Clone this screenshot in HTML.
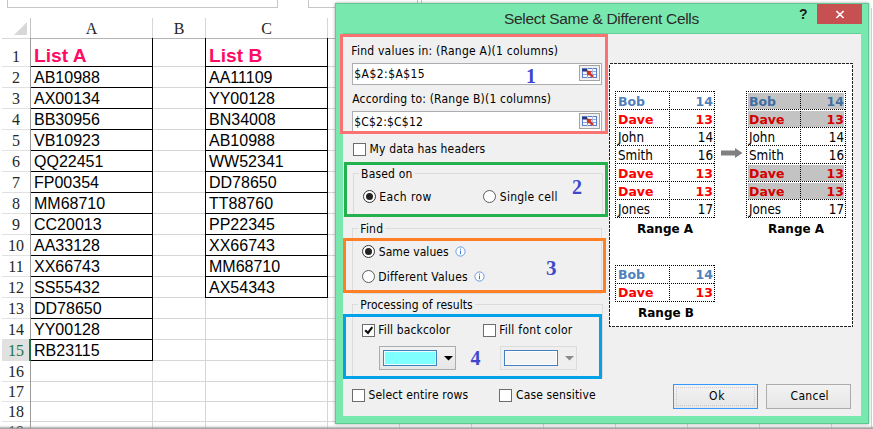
<!DOCTYPE html>
<html><head><meta charset="utf-8"><title>Select Same &amp; Different Cells</title>
<style>
html,body{margin:0;padding:0;}
body{width:873px;height:429px;position:relative;overflow:hidden;background:#fff;font-family:"Liberation Sans",sans-serif;}
.a{position:absolute;}
.gl{position:absolute;background:#d6d6d6;}
.bl{position:absolute;background:#000;}
.rn{position:absolute;left:2px;width:28px;text-align:center;font:16px/20px "Liberation Serif",serif;color:#262626;height:20px;}
.ch{position:absolute;top:19px;height:20px;text-align:center;font:16px/20px "Liberation Serif",serif;color:#262626;}
.ct{position:absolute;font:16px/20px "Liberation Sans",sans-serif;color:#000;white-space:nowrap;height:20px;}
.hd{font-weight:bold;font-size:19.2px;color:#ff0a64;}
.dt{position:absolute;font:12px/14px "DejaVu Sans Condensed","DejaVu Sans",sans-serif;color:#000;white-space:nowrap;letter-spacing:0px;}
.cb{position:absolute;width:11px;height:11px;border:1px solid #6c6c6c;background:#fff;}
.rd{position:absolute;width:11px;height:11px;border:1px solid #5c5c5c;background:#fff;border-radius:50%;}
.rd.on{border-color:#333;}
.rd.on:after{content:"";position:absolute;left:2px;top:2px;width:7px;height:7px;border-radius:50%;background:#222;}
.gb{position:absolute;border:1px solid #dcdcdc;}
.num{position:absolute;font:bold 20px/20px "Liberation Serif",serif;color:#3f48cc;}
.pv{position:absolute;font:bold 12.5px/18px "DejaVu Sans",sans-serif;white-space:nowrap;}
.btn{position:absolute;box-sizing:border-box;border:1px solid #acacac;background:linear-gradient(#f2f2f2,#e6e6e6);}
</style></head><body>

<div class="a" id="sheet" style="left:0;top:0;width:340px;height:429px;">
<div class="a" style="left:7px;top:0;width:269px;height:7px;border:1px solid #c6c6c6;border-top:none;"></div>
<div class="a" style="left:308px;top:0;width:108px;height:7px;border:1px solid #c6c6c6;border-top:none;"></div>
<div class="a" style="left:2px;top:340px;width:27px;height:20px;background:#e1e1e1;"></div>
<div class="gl" style="left:2px;top:38px;width:28px;height:1px;background:#d8d8d8;"></div>
<div class="gl" style="left:30px;top:38px;width:305px;height:1px;background:#b4b4b4;"></div>
<div class="gl" style="left:2px;top:66px;width:28px;height:1px;background:#e0e0e0;"></div>
<div class="gl" style="left:31px;top:66px;width:304px;height:1px;"></div>
<div class="gl" style="left:2px;top:87px;width:28px;height:1px;background:#e0e0e0;"></div>
<div class="gl" style="left:31px;top:87px;width:304px;height:1px;"></div>
<div class="gl" style="left:2px;top:108px;width:28px;height:1px;background:#e0e0e0;"></div>
<div class="gl" style="left:31px;top:108px;width:304px;height:1px;"></div>
<div class="gl" style="left:2px;top:129px;width:28px;height:1px;background:#e0e0e0;"></div>
<div class="gl" style="left:31px;top:129px;width:304px;height:1px;"></div>
<div class="gl" style="left:2px;top:150px;width:28px;height:1px;background:#e0e0e0;"></div>
<div class="gl" style="left:31px;top:150px;width:304px;height:1px;"></div>
<div class="gl" style="left:2px;top:171px;width:28px;height:1px;background:#e0e0e0;"></div>
<div class="gl" style="left:31px;top:171px;width:304px;height:1px;"></div>
<div class="gl" style="left:2px;top:192px;width:28px;height:1px;background:#e0e0e0;"></div>
<div class="gl" style="left:31px;top:192px;width:304px;height:1px;"></div>
<div class="gl" style="left:2px;top:213px;width:28px;height:1px;background:#e0e0e0;"></div>
<div class="gl" style="left:31px;top:213px;width:304px;height:1px;"></div>
<div class="gl" style="left:2px;top:234px;width:28px;height:1px;background:#e0e0e0;"></div>
<div class="gl" style="left:31px;top:234px;width:304px;height:1px;"></div>
<div class="gl" style="left:2px;top:255px;width:28px;height:1px;background:#e0e0e0;"></div>
<div class="gl" style="left:31px;top:255px;width:304px;height:1px;"></div>
<div class="gl" style="left:2px;top:276px;width:28px;height:1px;background:#e0e0e0;"></div>
<div class="gl" style="left:31px;top:276px;width:304px;height:1px;"></div>
<div class="gl" style="left:2px;top:297px;width:28px;height:1px;background:#e0e0e0;"></div>
<div class="gl" style="left:31px;top:297px;width:304px;height:1px;"></div>
<div class="gl" style="left:2px;top:318px;width:28px;height:1px;background:#e0e0e0;"></div>
<div class="gl" style="left:31px;top:318px;width:304px;height:1px;"></div>
<div class="gl" style="left:2px;top:339px;width:28px;height:1px;background:#e0e0e0;"></div>
<div class="gl" style="left:31px;top:339px;width:304px;height:1px;"></div>
<div class="gl" style="left:2px;top:360px;width:28px;height:1px;background:#e0e0e0;"></div>
<div class="gl" style="left:31px;top:360px;width:304px;height:1px;"></div>
<div class="gl" style="left:2px;top:381px;width:28px;height:1px;background:#e0e0e0;"></div>
<div class="gl" style="left:31px;top:381px;width:304px;height:1px;"></div>
<div class="gl" style="left:2px;top:401px;width:28px;height:1px;background:#e0e0e0;"></div>
<div class="gl" style="left:31px;top:401px;width:304px;height:1px;"></div>
<div class="gl" style="left:2px;top:421px;width:28px;height:1px;background:#e0e0e0;"></div>
<div class="gl" style="left:31px;top:421px;width:304px;height:1px;"></div>
<div class="gl" style="left:30px;top:18px;width:1px;height:20px;background:#c4c4c4;"></div>
<div class="gl" style="left:30px;top:38px;width:1px;height:391px;background:#9a9a9a;"></div>
<div class="gl" style="left:152px;top:18px;width:1px;height:411px;"></div>
<div class="gl" style="left:205px;top:18px;width:1px;height:411px;"></div>
<div class="gl" style="left:327px;top:18px;width:1px;height:411px;"></div>
<svg class="a" style="left:14px;top:22px;" width="13" height="13"><polygon points="13,0 13,13 0,13" fill="#d8d8d8"/></svg>
<div class="bl" style="left:152px;top:38px;width:1px;height:323px;"></div>
<div class="bl" style="left:205px;top:38px;width:1px;height:260px;"></div>
<div class="bl" style="left:327px;top:38px;width:1px;height:260px;"></div>
<div class="bl" style="left:31px;top:66px;width:122px;height:1px;"></div>
<div class="bl" style="left:31px;top:87px;width:122px;height:1px;"></div>
<div class="bl" style="left:31px;top:108px;width:122px;height:1px;"></div>
<div class="bl" style="left:31px;top:129px;width:122px;height:1px;"></div>
<div class="bl" style="left:31px;top:150px;width:122px;height:1px;"></div>
<div class="bl" style="left:31px;top:171px;width:122px;height:1px;"></div>
<div class="bl" style="left:31px;top:192px;width:122px;height:1px;"></div>
<div class="bl" style="left:31px;top:213px;width:122px;height:1px;"></div>
<div class="bl" style="left:31px;top:234px;width:122px;height:1px;"></div>
<div class="bl" style="left:31px;top:255px;width:122px;height:1px;"></div>
<div class="bl" style="left:31px;top:276px;width:122px;height:1px;"></div>
<div class="bl" style="left:31px;top:297px;width:122px;height:1px;"></div>
<div class="bl" style="left:31px;top:318px;width:122px;height:1px;"></div>
<div class="bl" style="left:31px;top:339px;width:122px;height:1px;"></div>
<div class="bl" style="left:31px;top:360px;width:122px;height:1px;"></div>
<div class="bl" style="left:205px;top:66px;width:123px;height:1px;"></div>
<div class="bl" style="left:205px;top:87px;width:123px;height:1px;"></div>
<div class="bl" style="left:205px;top:108px;width:123px;height:1px;"></div>
<div class="bl" style="left:205px;top:129px;width:123px;height:1px;"></div>
<div class="bl" style="left:205px;top:150px;width:123px;height:1px;"></div>
<div class="bl" style="left:205px;top:171px;width:123px;height:1px;"></div>
<div class="bl" style="left:205px;top:192px;width:123px;height:1px;"></div>
<div class="bl" style="left:205px;top:213px;width:123px;height:1px;"></div>
<div class="bl" style="left:205px;top:234px;width:123px;height:1px;"></div>
<div class="bl" style="left:205px;top:255px;width:123px;height:1px;"></div>
<div class="bl" style="left:205px;top:276px;width:123px;height:1px;"></div>
<div class="bl" style="left:205px;top:297px;width:123px;height:1px;"></div>
<div class="a" style="left:29px;top:339px;width:2px;height:22px;background:#217346;"></div>
<div class="ch" style="left:31px;width:121px;">A</div>
<div class="ch" style="left:153px;width:52px;">B</div>
<div class="ch" style="left:206px;width:121px;">C</div>
<div class="rn" style="top:47px;">1</div>
<div class="rn" style="top:68px;">2</div>
<div class="rn" style="top:89px;">3</div>
<div class="rn" style="top:110px;">4</div>
<div class="rn" style="top:131px;">5</div>
<div class="rn" style="top:152px;">6</div>
<div class="rn" style="top:173px;">7</div>
<div class="rn" style="top:194px;">8</div>
<div class="rn" style="top:215px;">9</div>
<div class="rn" style="top:236px;">10</div>
<div class="rn" style="top:257px;">11</div>
<div class="rn" style="top:278px;">12</div>
<div class="rn" style="top:299px;">13</div>
<div class="rn" style="top:320px;">14</div>
<div class="rn" style="top:341px;color:#217346;">15</div>
<div class="rn" style="top:362px;">16</div>
<div class="rn" style="top:382px;">17</div>
<div class="rn" style="top:402px;">18</div>
<div class="rn" style="top:422px;">19</div>
<div class="ct hd" style="left:34px;top:46px;">List A</div>
<div class="ct" style="left:34px;top:68px;">AB10988</div>
<div class="ct" style="left:34px;top:89px;">AX00134</div>
<div class="ct" style="left:34px;top:110px;">BB30956</div>
<div class="ct" style="left:34px;top:131px;">VB10923</div>
<div class="ct" style="left:34px;top:152px;">QQ22451</div>
<div class="ct" style="left:34px;top:173px;">FP00354</div>
<div class="ct" style="left:34px;top:194px;">MM68710</div>
<div class="ct" style="left:34px;top:215px;">CC20013</div>
<div class="ct" style="left:34px;top:236px;">AA33128</div>
<div class="ct" style="left:34px;top:257px;">XX66743</div>
<div class="ct" style="left:34px;top:278px;">SS55432</div>
<div class="ct" style="left:34px;top:299px;">DD78650</div>
<div class="ct" style="left:34px;top:320px;">YY00128</div>
<div class="ct" style="left:34px;top:341px;">RB23115</div>
<div class="ct hd" style="left:209px;top:46px;">List B</div>
<div class="ct" style="left:209px;top:68px;">AA11109</div>
<div class="ct" style="left:209px;top:89px;">YY00128</div>
<div class="ct" style="left:209px;top:110px;">BN34008</div>
<div class="ct" style="left:209px;top:131px;">AB10988</div>
<div class="ct" style="left:209px;top:152px;">WW52341</div>
<div class="ct" style="left:209px;top:173px;">DD78650</div>
<div class="ct" style="left:209px;top:194px;">TT88760</div>
<div class="ct" style="left:209px;top:215px;">PP22345</div>
<div class="ct" style="left:209px;top:236px;">XX66743</div>
<div class="ct" style="left:209px;top:257px;">MM68710</div>
<div class="ct" style="left:209px;top:278px;">AX54343</div>
</div>
<div class="a" style="left:869px;top:0;width:4px;height:429px;background:#fff;"></div>
<div class="a" style="left:871px;top:8px;width:1px;height:421px;background:#d0d0d0;"></div>
<div class="a" style="left:421px;top:0;width:1px;height:3px;background:#c6c6c6;"></div>
<div class="gl" style="left:399px;top:424px;width:1px;height:5px;"></div>
<div class="gl" style="left:471px;top:424px;width:1px;height:5px;"></div>
<div class="gl" style="left:543px;top:424px;width:1px;height:5px;"></div>
<div class="gl" style="left:615px;top:424px;width:1px;height:5px;"></div>
<div class="gl" style="left:687px;top:424px;width:1px;height:5px;"></div>
<div class="gl" style="left:759px;top:424px;width:1px;height:5px;"></div>
<div class="gl" style="left:831px;top:424px;width:1px;height:5px;"></div>
<div class="a" style="left:0;top:425px;width:873px;height:4px;background:linear-gradient(rgba(160,160,160,0),rgba(160,160,160,.25) 40%,rgba(150,150,150,.8) 75%,#a0a0a0);"></div>
<div class="a" id="dlg" style="left:335px;top:3px;width:534px;height:421px;background:#79e8ae;box-sizing:border-box;border:1px solid #5fc894;box-shadow:0 0 3px rgba(0,0,0,.35);">
</div>
<div class="a" style="left:343px;top:34px;width:518px;height:382px;background:#f0f0f0;"></div>
<div class="a" style="left:343px;top:33px;width:518px;height:1px;background:#62cf99;"></div>
<div class="a" style="left:504px;top:9px;font:15.5px/20px 'Liberation Sans',sans-serif;color:#2b2b2b;white-space:nowrap;letter-spacing:-.31px;" id="title">Select Same &amp; Different Cells</div>
<div class="a" style="left:799px;top:5px;width:9px;font:bold 14px/18px 'Liberation Sans',sans-serif;color:#1a1a1a;" id="q">?</div>
<div class="a" style="left:817px;top:4px;width:45px;height:20px;background:#c75050;"></div>
<svg class="a" style="left:835px;top:10px;" width="10" height="9" viewBox="0 0 10 9"><path d="M1.4 1 L8.6 8 M8.6 1 L1.4 8" stroke="#fff" stroke-width="1.7" fill="none"/></svg>
<div class="a" style="left:340px;top:34px;width:262px;height:94px;border:3px solid #fa7373;background:#f0f0f0;"></div>
<div class="dt" style="left:351.34px;top:44px;letter-spacing:0.237px;" id="t1">Find values in: (Range A)(1 columns)</div>
<div class="dt" style="left:352.17px;top:92px;letter-spacing:0.200px;" id="t2">According to: (Range B)(1 columns)</div>
<div class="a" style="left:352px;top:63px;width:248px;height:20px;border:1px solid #abadb3;background:#fff;"></div>
<div class="dt" style="left:354.32px;top:67px;letter-spacing:0.438px;" id="i1">$A$2:$A$15</div>
<div class="a" style="left:579px;top:65px;width:19px;height:14px;border:1px solid #a3a3a3;background:#f0f0f0;"><svg class="a" style="left:2px;top:2px;" width="15" height="10" viewBox="0 0 15 10">
<rect x="0" y="0" width="15" height="10" fill="#f4f8ff"/>
<path d="M0 .5H15M0 9.5H15" stroke="#5b7cc4" stroke-width="1"/>
<path d="M0 3.5H15M0 6.5H15" stroke="#8ea9e2" stroke-width="1"/>
<path d="M.5 0V10M14.5 0V10" stroke="#5b7cc4" stroke-width="1"/>
<path d="M5.5 0V10M10.5 0V10" stroke="#a9bdea" stroke-width="1"/>
<rect x="0" y="1" width="5" height="2.2" fill="#2a3a78"/>
<path d="M4.8 2.8 L9.6 3.6 L8.4 4.9 L11.6 8.1 L10.1 9.6 L6.9 6.4 L5.6 7.7 Z" fill="#d8301f" stroke="#b02418" stroke-width=".4"/>
</svg></div>
<div class="a" style="left:352px;top:111px;width:248px;height:20px;border:1px solid #abadb3;background:#fff;"></div>
<div class="dt" style="left:354.18px;top:115px;letter-spacing:0.208px;" id="i2">$C$2:$C$12</div>
<div class="a" style="left:579px;top:113px;width:19px;height:14px;border:1px solid #a3a3a3;background:#f0f0f0;"><svg class="a" style="left:2px;top:2px;" width="15" height="10" viewBox="0 0 15 10">
<rect x="0" y="0" width="15" height="10" fill="#f4f8ff"/>
<path d="M0 .5H15M0 9.5H15" stroke="#5b7cc4" stroke-width="1"/>
<path d="M0 3.5H15M0 6.5H15" stroke="#8ea9e2" stroke-width="1"/>
<path d="M.5 0V10M14.5 0V10" stroke="#5b7cc4" stroke-width="1"/>
<path d="M5.5 0V10M10.5 0V10" stroke="#a9bdea" stroke-width="1"/>
<rect x="0" y="1" width="5" height="2.2" fill="#2a3a78"/>
<path d="M4.8 2.8 L9.6 3.6 L8.4 4.9 L11.6 8.1 L10.1 9.6 L6.9 6.4 L5.6 7.7 Z" fill="#d8301f" stroke="#b02418" stroke-width=".4"/>
</svg></div>
<div class="num" style="left:526px;top:66px;" id="n1">1</div>
<div class="a" style="left:340px;top:131px;width:268px;height:3px;background:#fa7373;"></div>
<div class="cb" style="left:353px;top:143px;"></div>
<div class="dt" style="left:369.60px;top:142px;letter-spacing:0.137px;" id="t3">My data has headers</div>
<div class="gb" style="left:353px;top:173px;width:248px;height:41px;"></div>
<div class="dt" style="left:359.10px;top:167px;letter-spacing:0.164px;background:#f0f0f0;padding:0 2px;" id="t4">Based on</div>
<div class="rd on" style="left:363px;top:190px;"></div>
<div class="dt" style="left:379.24px;top:190px;letter-spacing:0.400px;" id="t5">Each row</div>
<div class="rd" style="left:483px;top:190px;"></div>
<div class="dt" style="left:499.83px;top:190px;letter-spacing:0.235px;" id="t6">Single cell</div>
<div class="num" style="left:572px;top:177px;" id="n2">2</div>
<div class="a" style="left:344px;top:162px;width:258px;height:49px;border:3px solid #22b14c;"></div>
<div class="gb" style="left:352px;top:228px;width:248px;height:64px;"></div>
<div class="dt" style="left:358.32px;top:222px;letter-spacing:0.226px;background:#f0f0f0;padding:0 2px;" id="t7">Find</div>
<div class="rd on" style="left:362px;top:245px;"></div>
<div class="dt" style="left:378.72px;top:245px;letter-spacing:0.080px;" id="t8">Same values</div>
<div class="rd" style="left:362px;top:270px;"></div>
<div class="dt" style="left:378.34px;top:270px;letter-spacing:0.216px;" id="t9">Different Values</div>
<svg class="a" style="left:455px;top:246px;" width="11" height="11" viewBox="0 0 11 11"><circle cx="5.5" cy="5.5" r="4.6" fill="#fff" stroke="#6a9be0" stroke-width="1"/><rect x="5" y="4.6" width="1" height="3.6" fill="#3a74cf"/><rect x="5" y="2.6" width="1" height="1.1" fill="#3a74cf"/></svg>
<svg class="a" style="left:474px;top:271px;" width="11" height="11" viewBox="0 0 11 11"><circle cx="5.5" cy="5.5" r="4.6" fill="#fff" stroke="#6a9be0" stroke-width="1"/><rect x="5" y="4.6" width="1" height="3.6" fill="#3a74cf"/><rect x="5" y="2.6" width="1" height="1.1" fill="#3a74cf"/></svg>
<div class="num" style="left:546px;top:258px;font-size:21px;" id="n3">3</div>
<div class="a" style="left:343px;top:238px;width:257px;height:49px;border:3px solid #ff7f27;"></div>
<div class="gb" style="left:352px;top:304px;width:249px;height:72px;"></div>
<div class="dt" style="left:358.32px;top:298px;letter-spacing:0.070px;background:#f0f0f0;padding:0 2px;" id="t10">Processing of results</div>
<div class="cb" style="left:362px;top:324px;"></div>
<svg class="a" style="left:363px;top:325px;" width="11" height="11" viewBox="0 0 11 11"><path d="M2.2 5.2 L5 8 L9.3 2.2" stroke="#0a0a0a" stroke-width="2.1" fill="none"/></svg>
<div class="dt" style="left:378.34px;top:323px;letter-spacing:0.140px;" id="t11">Fill backcolor</div>
<div class="cb" style="left:483px;top:324px;"></div>
<div class="dt" style="left:499.24px;top:323px;letter-spacing:0.267px;" id="t12">Fill font color</div>
<div class="btn" style="left:379px;top:346px;width:77px;height:24px;"></div>
<div class="a" style="left:383px;top:350px;width:52px;height:14px;border:1px solid #4480c0;background:#80ffff;box-shadow:inset 0 0 0 1px #e8ffff;"></div>
<svg class="a" style="left:443.5px;top:356px;" width="9" height="5"><polygon points="0,0 9,0 4.5,4.5" fill="#000"/></svg>
<div class="btn" style="left:500px;top:346px;width:77px;height:24px;border-color:#dcdcdc;background:#efefef;"></div>
<div class="a" style="left:504px;top:350px;width:52px;height:14px;border:1px solid #4480c0;background:#f4f4f4;box-shadow:inset 0 0 0 1px #fff;"></div>
<svg class="a" style="left:564.5px;top:356px;" width="9" height="5"><polygon points="0,0 9,0 4.5,4.5" fill="#8a8a8a"/></svg>
<div class="num" style="left:470.5px;top:348px;" id="n4">4</div>
<div class="a" style="left:343px;top:314px;width:253px;height:59px;border:3px solid #00a2e8;"></div>
<div class="cb" style="left:352px;top:389px;"></div>
<div class="dt" style="left:368.42px;top:388px;letter-spacing:0.159px;" id="t13">Select entire rows</div>
<div class="cb" style="left:499px;top:389px;"></div>
<div class="dt" style="left:516.10px;top:388px;letter-spacing:0.125px;" id="t14">Case sensitive</div>
<div class="btn" style="left:673px;top:384px;width:85px;height:25px;border-color:#3399ff;"></div>
<div class="a" style="left:676px;top:387px;width:77px;height:17px;border:1px dotted rgba(0,0,0,.13);"></div>
<div class="dt" style="left:709.01px;top:389px;letter-spacing:0.826px;" id="b1">Ok</div>
<div class="btn" style="left:766px;top:384px;width:85px;height:25px;"></div>
<div class="dt" style="left:790.55px;top:389px;letter-spacing:0.295px;" id="b2">Cancel</div>
<svg class="a" style="left:609px;top:62px;" width="245" height="266" viewBox="0 0 245 266">
<rect x="0.5" y="1.5" width="243" height="263" fill="#fff" stroke="#222" stroke-width="1" stroke-dasharray="3 1" shape-rendering="crispEdges"/>
<g stroke="#000" stroke-width="1" stroke-dasharray="1 1" fill="none" shape-rendering="crispEdges"><line x1="6" y1="29.5" x2="106" y2="29.5"/><line x1="6" y1="47.5" x2="106" y2="47.5"/><line x1="6" y1="65.5" x2="106" y2="65.5"/><line x1="6" y1="83.5" x2="106" y2="83.5"/><line x1="6" y1="101.5" x2="106" y2="101.5"/><line x1="6" y1="119.5" x2="106" y2="119.5"/><line x1="6" y1="137.5" x2="106" y2="137.5"/><line x1="6" y1="155.5" x2="106" y2="155.5"/><line x1="6.5" y1="29" x2="6.5" y2="156"/><line x1="60.5" y1="29" x2="60.5" y2="156"/><line x1="105.5" y1="29" x2="105.5" y2="156"/></g>
<g stroke="#000" stroke-width="1" stroke-dasharray="1 1" fill="none" shape-rendering="crispEdges"><rect x="139" y="31" width="96" height="16" fill="#c3c3c3" stroke="none"/><rect x="139" y="49" width="96" height="16" fill="#c3c3c3" stroke="none"/><rect x="139" y="103" width="96" height="16" fill="#c3c3c3" stroke="none"/><rect x="139" y="121" width="96" height="16" fill="#c3c3c3" stroke="none"/><line x1="137" y1="29.5" x2="237" y2="29.5"/><line x1="137" y1="47.5" x2="237" y2="47.5"/><line x1="137" y1="65.5" x2="237" y2="65.5"/><line x1="137" y1="83.5" x2="237" y2="83.5"/><line x1="137" y1="101.5" x2="237" y2="101.5"/><line x1="137" y1="119.5" x2="237" y2="119.5"/><line x1="137" y1="137.5" x2="237" y2="137.5"/><line x1="137" y1="155.5" x2="237" y2="155.5"/><line x1="137.5" y1="29" x2="137.5" y2="156"/><line x1="191.5" y1="29" x2="191.5" y2="156"/><line x1="236.5" y1="29" x2="236.5" y2="156"/></g>
<g stroke="#000" stroke-width="1" stroke-dasharray="1 1" fill="none" shape-rendering="crispEdges"><line x1="6" y1="203.5" x2="106" y2="203.5"/><line x1="6" y1="221.5" x2="106" y2="221.5"/><line x1="6" y1="239.5" x2="106" y2="239.5"/><line x1="6.5" y1="203" x2="6.5" y2="240"/><line x1="60.5" y1="203" x2="60.5" y2="240"/><line x1="105.5" y1="203" x2="105.5" y2="240"/></g>
<path d="M112 88.5 H126 V86 L133.5 91 L126 96 V93.5 H112 Z" fill="#808080"/>
</svg>
<div class="pv" style="left:618px;top:93px;color:#4f81bd;font-weight:bold;">Bob</div>
<div class="pv" style="left:673px;top:93px;width:40px;text-align:right;color:#4f81bd;font-weight:bold;">14</div>
<div class="pv" style="left:618px;top:111px;color:#ff0000;font-weight:bold;">Dave</div>
<div class="pv" style="left:673px;top:111px;width:40px;text-align:right;color:#ff0000;font-weight:bold;">13</div>
<div class="pv" style="left:618px;top:129px;color:#000;font-weight:normal;font-family:'DejaVu Sans Condensed','DejaVu Sans',sans-serif;font-size:13.3px;">John</div>
<div class="pv" style="left:673px;top:129px;width:40px;text-align:right;color:#000;font-weight:normal;font-family:'DejaVu Sans Condensed','DejaVu Sans',sans-serif;font-size:13.3px;">14</div>
<div class="pv" style="left:618px;top:147px;color:#000;font-weight:normal;font-family:'DejaVu Sans Condensed','DejaVu Sans',sans-serif;font-size:13.3px;">Smith</div>
<div class="pv" style="left:673px;top:147px;width:40px;text-align:right;color:#000;font-weight:normal;font-family:'DejaVu Sans Condensed','DejaVu Sans',sans-serif;font-size:13.3px;">16</div>
<div class="pv" style="left:618px;top:165px;color:#ff0000;font-weight:bold;">Dave</div>
<div class="pv" style="left:673px;top:165px;width:40px;text-align:right;color:#ff0000;font-weight:bold;">13</div>
<div class="pv" style="left:618px;top:183px;color:#ff0000;font-weight:bold;">Dave</div>
<div class="pv" style="left:673px;top:183px;width:40px;text-align:right;color:#ff0000;font-weight:bold;">13</div>
<div class="pv" style="left:618px;top:201px;color:#000;font-weight:normal;font-family:'DejaVu Sans Condensed','DejaVu Sans',sans-serif;font-size:13.3px;">Jones</div>
<div class="pv" style="left:673px;top:201px;width:40px;text-align:right;color:#000;font-weight:normal;font-family:'DejaVu Sans Condensed','DejaVu Sans',sans-serif;font-size:13.3px;">17</div>
<div class="pv" style="left:749px;top:93px;color:#3f6ea3;font-weight:bold;">Bob</div>
<div class="pv" style="left:804px;top:93px;width:40px;text-align:right;color:#3f6ea3;font-weight:bold;">14</div>
<div class="pv" style="left:749px;top:111px;color:#d40000;font-weight:bold;">Dave</div>
<div class="pv" style="left:804px;top:111px;width:40px;text-align:right;color:#d40000;font-weight:bold;">13</div>
<div class="pv" style="left:749px;top:129px;color:#000;font-weight:normal;font-family:'DejaVu Sans Condensed','DejaVu Sans',sans-serif;font-size:13.3px;">John</div>
<div class="pv" style="left:804px;top:129px;width:40px;text-align:right;color:#000;font-weight:normal;font-family:'DejaVu Sans Condensed','DejaVu Sans',sans-serif;font-size:13.3px;">14</div>
<div class="pv" style="left:749px;top:147px;color:#000;font-weight:normal;font-family:'DejaVu Sans Condensed','DejaVu Sans',sans-serif;font-size:13.3px;">Smith</div>
<div class="pv" style="left:804px;top:147px;width:40px;text-align:right;color:#000;font-weight:normal;font-family:'DejaVu Sans Condensed','DejaVu Sans',sans-serif;font-size:13.3px;">16</div>
<div class="pv" style="left:749px;top:165px;color:#d40000;font-weight:bold;">Dave</div>
<div class="pv" style="left:804px;top:165px;width:40px;text-align:right;color:#d40000;font-weight:bold;">13</div>
<div class="pv" style="left:749px;top:183px;color:#d40000;font-weight:bold;">Dave</div>
<div class="pv" style="left:804px;top:183px;width:40px;text-align:right;color:#d40000;font-weight:bold;">13</div>
<div class="pv" style="left:749px;top:201px;color:#000;font-weight:normal;font-family:'DejaVu Sans Condensed','DejaVu Sans',sans-serif;font-size:13.3px;">Jones</div>
<div class="pv" style="left:804px;top:201px;width:40px;text-align:right;color:#000;font-weight:normal;font-family:'DejaVu Sans Condensed','DejaVu Sans',sans-serif;font-size:13.3px;">17</div>
<div class="pv" style="left:618px;top:266px;color:#4f81bd;font-weight:bold;">Bob</div>
<div class="pv" style="left:673px;top:266px;width:40px;text-align:right;color:#4f81bd;font-weight:bold;">14</div>
<div class="pv" style="left:618px;top:284px;color:#ff0000;font-weight:bold;">Dave</div>
<div class="pv" style="left:673px;top:284px;width:40px;text-align:right;color:#ff0000;font-weight:bold;">13</div>
<div class="pv" style="left:637px;top:220px;color:#000;font-size:12px;" id="ra1">Range A</div>
<div class="pv" style="left:768px;top:220px;color:#000;font-size:12px;" id="ra2">Range A</div>
<div class="pv" style="left:638px;top:304px;color:#000;font-size:12px;" id="rb">Range B</div>
</body></html>
